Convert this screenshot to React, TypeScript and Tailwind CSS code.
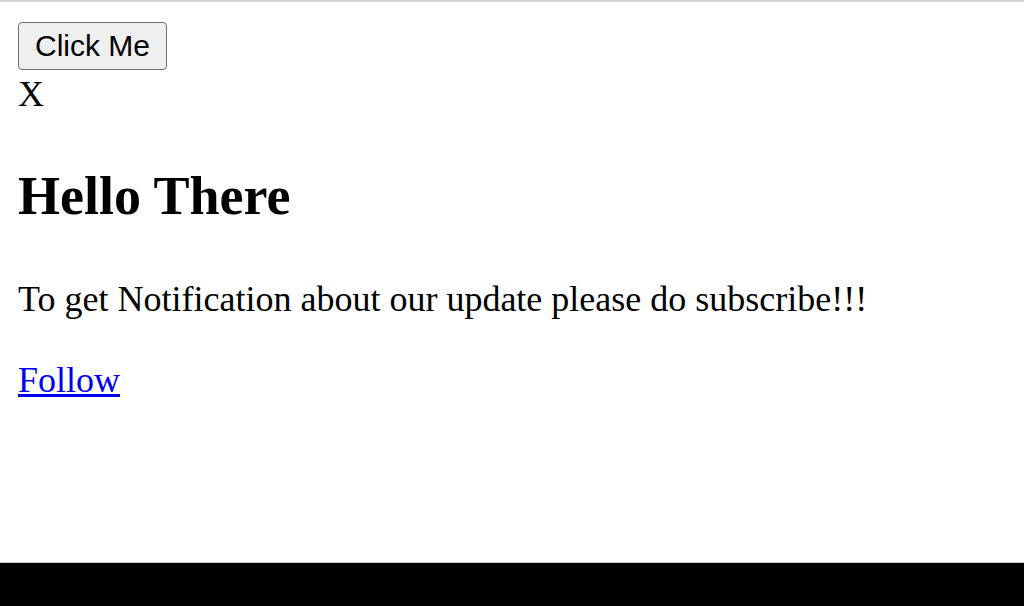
export default function App() {
  return (
    <div className="flex h-[606px] flex-col bg-white text-black">
      <div className="h-[2px] bg-[#d3d3d3]" />

      <main className="flex-1 px-[18px] pt-[20px] font-['Liberation_Serif',serif]">
        <button className="flex h-[48px] w-[149px] items-center justify-center rounded-[4px] border-[1.5px] border-[#6f6f6f] bg-[#efefef] font-['Liberation_Sans',Arial,sans-serif] text-[30px] leading-none text-black">
          Click Me
        </button>
        <div className="h-[48px] text-[36px] leading-[48px]">X</div>

        <h1 className="mt-[46px] mb-[49px] text-[54px] leading-[64px] font-bold">Hello There</h1>
        <p className="mb-[37px] text-[36px] leading-[44px]">
          To get Notification about our update please do subscribe!!!
        </p>
        <p className="text-[36px] leading-[44px]">
          <a href="#" className="text-[#0000ee] underline">
            Follow
          </a>
        </p>
      </main>

      <div className="h-[44px] border-t border-[#c8c8c8] bg-black" />
    </div>
  )
}
